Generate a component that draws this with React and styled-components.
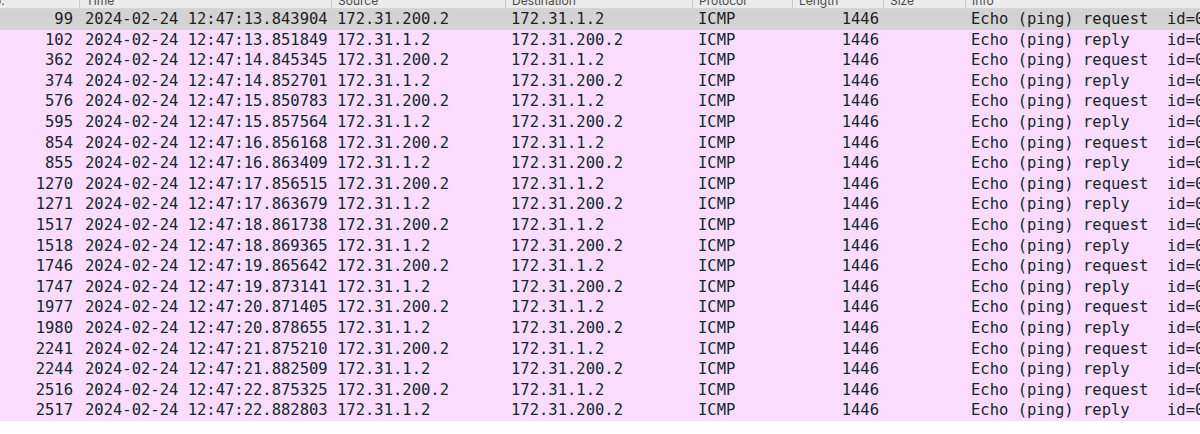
import { createGlobalStyle, styled } from "styled-components"

const GlobalStyle = createGlobalStyle`
	html, body {
		margin: 0;
		padding: 0;
		background: #ffffff;
	}
`

const columns = `100px 252px 174px 187px 100px 91px 82px 400px`

const Viewport = styled.div`
	width: 1200px;
	height: 434px;
	overflow: hidden;
	background: #ffffff;
`

const Table = styled.div`
	margin-left: -21px;
	width: max-content;
`

const HeaderRow = styled.div`
	display: grid;
	grid-template-columns: ${columns};
	height: 8px;
	background: #ececec;
	border-bottom: 1px solid #d6d6d6;
	overflow: hidden;
`

const HeaderCell = styled.div`
	display: flex;
	align-items: flex-end;
	height: 8px;
	padding: 0 6px;
	border-left: ${(p) => (p.$first ? "none" : "1px solid #c9c9c9")};
	font-family: "Inter", "Liberation Sans", sans-serif;
	font-size: 12px;
	line-height: 14px;
	color: #4a4a4a;
	overflow: hidden;
	white-space: nowrap;
`

const Row = styled.div`
	display: grid;
	grid-template-columns: ${columns};
	height: 20.6px;
	background: ${(p) => (p.$selected ? "#d3d3d3" : "#fcdcfe")};
	color: ${(p) => (p.$selected ? "#1e1e1e" : "#12272e")};
	font-family: "DejaVu Sans Mono", "Liberation Mono", monospace;
	font-size: 15.5px;
	line-height: 20.6px;
`

const Cell = styled.div`
	padding: 0 ${(p) => (p.$padRight ?? 6)}px 0 6px;
	text-align: ${(p) => (p.$right ? "right" : "left")};
	white-space: pre;
	overflow: hidden;
`

const headers = ["No.", "Time", "Source", "Destination", "Protocol", "Length", "Size", "Info"]

const packets = [
	[99, "13.843904", true],
	[102, "13.851849", false],
	[362, "14.845345", true],
	[374, "14.852701", false],
	[576, "15.850783", true],
	[595, "15.857564", false],
	[854, "16.856168", true],
	[855, "16.863409", false],
	[1270, "17.856515", true],
	[1271, "17.863679", false],
	[1517, "18.861738", true],
	[1518, "18.869365", false],
	[1746, "19.865642", true],
	[1747, "19.873141", false],
	[1977, "20.871405", true],
	[1980, "20.878655", false],
	[2241, "21.875210", true],
	[2244, "21.882509", false],
	[2516, "22.875325", true],
	[2517, "22.882803", false],
]

export default function App() {
	return (
		<Viewport>
			<GlobalStyle />
			<Table>
				<HeaderRow>
					{headers.map((h, i) => (
						<HeaderCell key={h} $first={i === 0}>
							<span>{h}</span>
						</HeaderCell>
					))}
				</HeaderRow>
				{packets.map(([no, secs, isRequest], i) => (
					<Row key={no} $selected={i === 0}>
						<Cell $right>{no}</Cell>
						<Cell>{`2024-02-24 12:47:${secs}`}</Cell>
						<Cell>{isRequest ? "172.31.200.2" : "172.31.1.2"}</Cell>
						<Cell>{isRequest ? "172.31.1.2" : "172.31.200.2"}</Cell>
						<Cell>ICMP</Cell>
						<Cell $right $padRight={4}>1446</Cell>
						<Cell></Cell>
						<Cell>
							{isRequest
								? "Echo (ping) request  id=0x0001, seq=1/256, ttl=64"
								: "Echo (ping) reply    id=0x0001, seq=1/256, ttl=64"}
						</Cell>
					</Row>
				))}
			</Table>
		</Viewport>
	)
}
